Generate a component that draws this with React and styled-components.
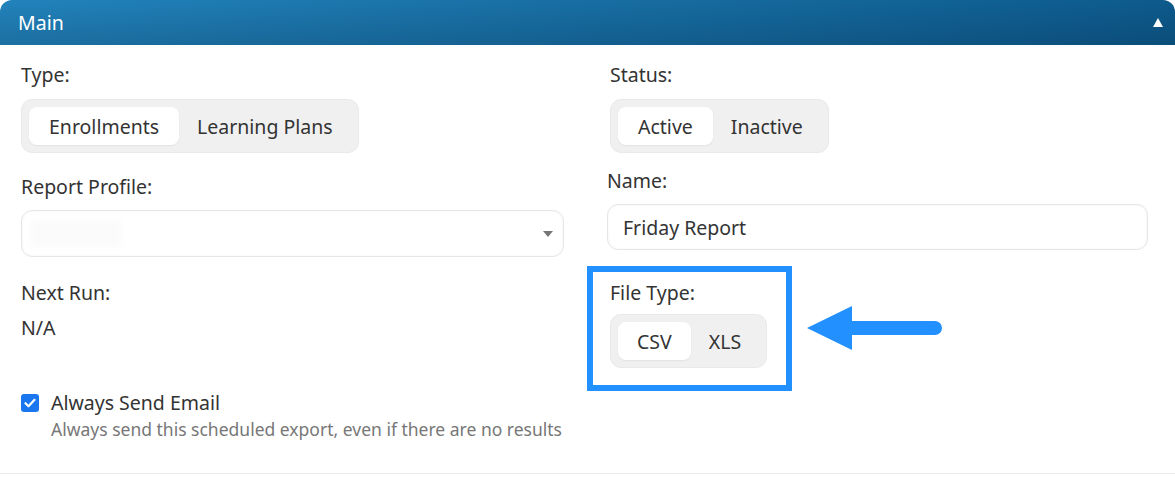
import React from "react";
import styled, { createGlobalStyle } from "styled-components";

const Global = createGlobalStyle`
  html, body { margin: 0; padding: 0; background: #fff; }
  body { font-family: "Noto Sans", "Open Sans", sans-serif; color: #333; }
  * { box-sizing: border-box; }
`;

const Panel = styled.section`
  width: 1175px;
  height: 477px;
  background: #fff;
`;

const Header = styled.header`
  height: 45px;
  display: flex;
  align-items: center;
  justify-content: space-between;
  padding: 0 12px 0 18px;
  border-radius: 12px 12px 0 0;
  background:
    linear-gradient(to bottom, rgba(0, 0, 0, 0) 0%, rgba(0, 20, 40, 0.18) 100%),
    linear-gradient(to right, #2283bc 0%, #0d5a8c 100%);
  color: #fff;
  font-size: 19.5px;
`;

const Caret = styled.span`
  width: 0;
  height: 0;
  border-left: 5.5px solid transparent;
  border-right: 5.5px solid transparent;
  border-${(p) => (p.$up ? "bottom" : "top")}: ${(p) => p.$size}px solid ${(p) => p.$color};
`;

const Body = styled.div`
  padding: 18px 27px 0 21px;
`;

const Columns = styled.div`
  display: grid;
  grid-template-columns: 543px 541px;
  column-gap: 43px;
  align-items: start;
`;

const Column = styled.div`
  display: flex;
  flex-direction: column;
`;

const Field = styled.div`
  display: flex;
  flex-direction: column;
  gap: ${(p) => p.$gap ?? 12}px;
  margin-top: ${(p) => p.$mt ?? 0}px;
  padding-left: ${(p) => p.$pl ?? 0}px;
`;

const Label = styled.div`
  font-size: 19.5px;
  line-height: 24px;
  color: #333;
`;

const Value = styled.div`
  font-size: 19.5px;
  line-height: 24px;
  color: #333;
`;

const Toggle = styled.div`
  display: inline-flex;
  align-self: flex-start;
  padding: 7px;
  background: #f0f0f0;
  border: 1px solid #e9e9e9;
  border-radius: 11px;
`;

const ToggleButton = styled.button`
  height: 38px;
  padding: 0 ${(p) => p.$px ?? 19}px;
  border: none;
  border-radius: 8px;
  font-family: inherit;
  font-size: 19.5px;
  color: #333;
  background: ${(p) => (p.$active ? "#fff" : "transparent")};
  box-shadow: ${(p) => (p.$active ? "0 1px 2px rgba(0,0,0,0.06)" : "none")};
  cursor: pointer;
`;

const InputBox = styled.div`
  height: ${(p) => p.$h}px;
  display: flex;
  align-items: center;
  justify-content: space-between;
  padding: 0 10px 0 15px;
  border: 1px solid #e6e6e6;
  border-radius: 11px;
  box-shadow: inset 0 0 3px rgba(0, 0, 0, 0.05);
  font-size: 19.5px;
  color: #333;
  background: #fff;
`;

const Redacted = styled.span`
  width: 90px;
  height: 28px;
  margin-left: -6px;
  background: #fbfbfc;
  filter: blur(2px);
`;

const Highlight = styled.div`
  margin-top: 16px;
  margin-left: -20px;
  width: 205px;
  border: 6px solid #2290ff;
  padding: 9px 0 17px 17px;
`;

const CheckRow = styled.label`
  display: flex;
  align-items: center;
  gap: 12px;
  font-size: 19.5px;
  line-height: 24px;
  color: #333;
`;

const CheckBox = styled.span`
  width: 18px;
  height: 18px;
  border-radius: 3px;
  background: #1a77f0;
  display: inline-flex;
  align-items: center;
  justify-content: center;
`;

const Hint = styled.div`
  margin: 3px 0 0 30px;
  font-size: 17.5px;
  line-height: 22px;
  color: #777;
`;

const Footer = styled.div`
  margin-top: 33px;
  border-bottom: 1px solid #ebebeb;
`;

const ArrowSlot = styled.svg`
  position: absolute;
  left: 806px;
  top: 305px;
`;

export default function App() {
  return (
    <>
      <Global />
      <Panel>
        <Header>
          <span>Main</span>
          <Caret $up $size={9} $color="#fff" />
        </Header>
        <Body>
          <Columns>
            <Column>
              <Field>
                <Label>Type:</Label>
                <Toggle>
                  <ToggleButton $active $px={20}>Enrollments</ToggleButton>
                  <ToggleButton $px={18}>Learning Plans</ToggleButton>
                </Toggle>
              </Field>
              <Field $mt={22} $gap={11}>
                <Label>Report Profile:</Label>
                <InputBox $h={47}>
                  <Redacted />
                  <Caret $size={6} $color="#777" />
                </InputBox>
              </Field>
              <Field $mt={24} $gap={11}>
                <Label>Next Run:</Label>
                <Value>N/A</Value>
              </Field>
            </Column>
            <Column>
              <Field $pl={3}>
                <Label>Status:</Label>
                <Toggle>
                  <ToggleButton $active $px={20}>Active</ToggleButton>
                  <ToggleButton $px={18}>Inactive</ToggleButton>
                </Toggle>
              </Field>
              <Field $mt={16} $gap={11}>
                <Label>Name:</Label>
                <InputBox $h={46}>Friday Report</InputBox>
              </Field>
              <Highlight>
                <Field $gap={9}>
                  <Label>File Type:</Label>
                  <Toggle>
                    <ToggleButton $active $px={19}>CSV</ToggleButton>
                    <ToggleButton $px={18}>XLS</ToggleButton>
                  </Toggle>
                </Field>
              </Highlight>
            </Column>
          </Columns>
          <CheckRow>
            <CheckBox>
              <svg width="12" height="10" viewBox="0 0 12 10">
                <path d="M1.5 5.2 L4.5 8.2 L10.5 1.8" fill="none" stroke="#fff" strokeWidth="2.2" strokeLinecap="round" strokeLinejoin="round" />
              </svg>
            </CheckBox>
            Always Send Email
          </CheckRow>
          <Hint>Always send this scheduled export, even if there are no results</Hint>
        </Body>
        <Footer />
        <ArrowSlot width="140" height="48" viewBox="0 0 140 48">
          <path d="M1 23 L46 1 L46 16 L129 16 A7 7 0 0 1 129 30 L46 30 L46 45 Z" fill="#2290ff" />
        </ArrowSlot>
      </Panel>
    </>
  );
}
